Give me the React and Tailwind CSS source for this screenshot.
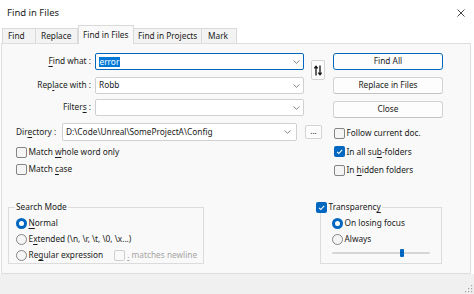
import React from 'react';

function U({ children }) {
  return <span className="underline underline-offset-[1.5px] decoration-[0.7px]">{children}</span>;
}

function Chevron() {
  return (
    <svg width="7" height="4" viewBox="0 0 7 4" className="shrink-0">
      <path d="M0.5 0.5 L3.5 3.3 L6.5 0.5" stroke="#7a7a7a" strokeWidth="0.9" fill="none" />
    </svg>
  );
}

function Checkbox({ checked = false, disabled = false }) {
  if (checked) {
    return (
      <span className="flex w-[11px] h-[11px] shrink-0 items-center justify-center rounded-[2px] bg-[#0067c0]">
        <svg width="9" height="9" viewBox="0 0 9 9">
          <path d="M2 4.8 L3.8 6.5 L7.2 2.8" stroke="#fff" strokeWidth="1.1" fill="none" />
        </svg>
      </span>
    );
  }
  return (
    <span
      className={`block w-[11px] h-[11px] shrink-0 rounded-[2px] border ${
        disabled ? 'border-[#cfcfcf] bg-[#f9f9f9]' : 'border-[#858585] bg-[#f5f5f5]'
      }`}
    />
  );
}

function Radio({ checked = false }) {
  if (checked) {
    return (
      <span className="flex w-[11px] h-[11px] shrink-0 items-center justify-center rounded-full bg-[#0067c0]">
        <span className="block w-[5px] h-[5px] rounded-full bg-white" />
      </span>
    );
  }
  return <span className="block w-[11px] h-[11px] shrink-0 rounded-full border border-[#858585] bg-[#f5f5f5]" />;
}

function Button({ primary = false, children }) {
  return (
    <div
      className={`flex h-[17px] w-[110px] items-center justify-center rounded-[3px] bg-[#fdfdfd] border ${
        primary ? 'border-[#0067c0]' : 'border-[#d3d3d3] border-b-[#c2c2c2]'
      }`}
    >
      {children}
    </div>
  );
}

export default function App() {
  return (
    <div className="w-[474px] h-[294px] overflow-hidden bg-white flex flex-col text-[8.3px] leading-none text-[#1b1b1b] font-['Noto_Sans',sans-serif]">
      {/* title bar */}
      <div className="h-[26px] shrink-0 flex items-center justify-between pl-[7px] pr-[9px]">
        <span className="text-[9.5px]">Find in Files</span>
        <svg width="8" height="8" viewBox="0 0 8 8">
          <path d="M0.5 0.5 L7.5 7.5 M7.5 0.5 L0.5 7.5" stroke="#333" strokeWidth="0.9" />
        </svg>
      </div>

      {/* tabs */}
      <div className="h-[17px] shrink-0 flex items-end pl-[2px] relative z-10">
        <div className="h-[15px] w-[34px] pl-[5px] flex items-center border border-b-0 border-[#dadada] bg-[#f3f3f3]">Find</div>
        <div className="h-[15px] w-[42px] pl-[5px] flex items-center border border-l-0 border-b-0 border-[#dadada] bg-[#f3f3f3]">Replace</div>
        <div className="h-[19px] w-[56px] pl-[4px] -mb-px flex items-center border border-b-0 border-[#dadada] bg-[#f9f9f9]">Find in Files</div>
        <div className="h-[15px] w-[68px] pl-[4px] flex items-center border border-l-0 border-b-0 border-[#dadada] bg-[#f3f3f3]">Find in Projects</div>
        <div className="h-[15px] w-[35px] pl-[6px] flex items-center border border-l-0 border-b-0 border-[#dadada] bg-[#f3f3f3]">Mark</div>
      </div>

      {/* panel */}
      <div className="h-[231px] shrink-0 ml-[1px] w-[470px] border border-[#dedede] bg-[#f9f9f9] flex flex-col">
        <div className="h-[157px] flex pt-[9px]">
          {/* left column */}
          <div className="w-[331px] flex flex-col">
            <div className="flex">
              <div className="flex flex-col gap-[7px]">
                <div className="flex items-center h-[17px]">
                  <span className="w-[90px] text-right pr-[1px]">
                    <U>F</U>ind what :
                  </span>
                  <div className="ml-[3px] w-[209px] h-[17px] flex items-center justify-between pl-[3px] pr-[3px] bg-white border border-[#0067c0] rounded-[2px]">
                    <span className="bg-[#0078d7] text-white leading-[10px] px-[0.5px]">error</span>
                    <Chevron />
                  </div>
                </div>
                <div className="flex items-center h-[17px]">
                  <span className="w-[90px] text-right pr-[1px]">
                    Rep<U>l</U>ace with :
                  </span>
                  <div className="ml-[3px] w-[209px] h-[17px] flex items-center justify-between pl-[3px] pr-[3px] bg-white border border-[#d0d0d0] rounded-[2px]">
                    <span>Robb</span>
                    <Chevron />
                  </div>
                </div>
              </div>
              <div className="ml-[7px] mt-[7px] w-[14px] h-[20px] flex items-center justify-center rounded-[2px] bg-[#fdfdfd] border border-[#d3d3d3]">
                <svg width="8" height="11" viewBox="0 0 8 11">
                  <path d="M2 10.5 V1.2 M0.3 3.3 L2 1.2 L3.7 3.3" stroke="#111" strokeWidth="1.3" fill="none" />
                  <path d="M6 0.5 V9.8 M4.3 7.7 L6 9.8 L7.7 7.7" stroke="#111" strokeWidth="1.3" fill="none" />
                </svg>
              </div>
            </div>

            <div className="flex items-center h-[17px] mt-[5px]">
              <span className="w-[90px] text-right pr-[1px]">
                Filter<U>s</U> :
              </span>
              <div className="ml-[3px] w-[209px] h-[17px] flex items-center justify-end pr-[3px] bg-white border border-[#d0d0d0] rounded-[2px]">
                <Chevron />
              </div>
            </div>

            <div className="flex items-center h-[18px] mt-[7px]">
              <span className="ml-[14px] w-[44px] whitespace-nowrap">
                Dir<U>e</U>ctory :
              </span>
              <div className="ml-[2px] w-[235px] h-[18px] flex items-center justify-between pl-[3px] pr-[5px] bg-white border border-[#d0d0d0] rounded-[2px]">
                <span>D:\Code\Unreal\SomeProjectA\Config</span>
                <Chevron />
              </div>
              <div className="ml-[8px] w-[17px] h-[14px] flex items-center justify-center rounded-[2px] bg-[#fdfdfd] border border-[#d3d3d3] pb-[2px]">
                ...
              </div>
            </div>

            <div className="mt-[3px] flex flex-col pl-[14px]">
              <div className="h-[17px] flex items-center gap-[1.5px]">
                <Checkbox />
                <span>
                  Match <U>w</U>hole word only
                </span>
              </div>
              <div className="h-[17px] flex items-center gap-[1.5px]">
                <Checkbox />
                <span>
                  Match <U>c</U>ase
                </span>
              </div>
            </div>
          </div>

          {/* right column */}
          <div className="w-[110px] flex flex-col">
            <div className="flex flex-col gap-[7px]">
              <Button primary>Find All</Button>
              <Button>Replace in Files</Button>
              <Button>Close</Button>
            </div>
            <div className="mt-[6px] flex flex-col pl-[1px]">
              <div className="h-[18.5px] flex items-center gap-[1.5px]">
                <Checkbox />
                <span>Follow current doc.</span>
              </div>
              <div className="h-[18.5px] flex items-center gap-[1.5px]">
                <Checkbox checked />
                <span>
                  In all su<U>b</U>-folders
                </span>
              </div>
              <div className="h-[18.5px] flex items-center gap-[1.5px]">
                <Checkbox />
                <span>
                  In <U>h</U>idden folders
                </span>
              </div>
            </div>
          </div>
        </div>

        {/* group boxes */}
        <div className="flex pl-[6px]">
          <fieldset className="w-[196px] border border-[#dcdcdc]">
            <legend className="ml-[6px] px-[1px] leading-[12px]">Search Mode</legend>
            <div className="pt-[2px] pl-[7px] flex flex-col">
              <div className="h-[16px] flex items-center gap-[1.5px]">
                <Radio checked />
                <span>
                  <U>N</U>ormal
                </span>
              </div>
              <div className="h-[16px] flex items-center gap-[1.5px]">
                <Radio />
                <span>
                  E<U>x</U>tended (\n, \r, \t, \0, \x...)
                </span>
              </div>
              <div className="h-[16px] flex items-center">
                <Radio />
                <span className="ml-[1.5px]">
                  Re<U>g</U>ular expression
                </span>
                <span className="ml-[11px]">
                  <Checkbox disabled />
                </span>
                <span className="ml-[2px] text-[#a6a6a6]">
                  <U>.</U> matches newline
                </span>
              </div>
            </div>
          </fieldset>

          <fieldset className="ml-[116px] w-[122px] border border-[#dcdcdc]">
            <legend className="-ml-[5px] pr-[1px] leading-[12px]">
              <span className="flex items-center gap-[1.5px]">
                <Checkbox checked />
                <span>
                  Transparenc<U>y</U>
                </span>
              </span>
            </legend>
            <div className="pt-[2px] pl-[11px] flex flex-col">
              <div className="h-[16px] flex items-center gap-[1.5px]">
                <Radio checked />
                <span>On losing focus</span>
              </div>
              <div className="h-[16px] flex items-center gap-[1.5px]">
                <Radio />
                <span>Always</span>
              </div>
              <div className="h-[16px] pt-[2px]">
                <div className="relative w-[98px] h-[8px]">
                  <div className="absolute left-0 right-0 top-[3px] h-[2px] rounded-full bg-[#d6d6d6]" />
                  <div className="absolute left-[68px] top-0 w-[4px] h-[8px] rounded-[1px] bg-[#0067c0]" />
                </div>
              </div>
            </div>
          </fieldset>
        </div>
      </div>

      {/* status bar */}
      <div className="flex-1 bg-[#f0f0f0] flex items-end justify-end pr-[1px] pb-[1px]">
        <svg width="8" height="8" viewBox="0 0 8 8">
          <rect x="6" y="0" width="1.2" height="1.2" fill="#a0a0a0" />
          <rect x="3" y="3" width="1.2" height="1.2" fill="#a0a0a0" />
          <rect x="6" y="3" width="1.2" height="1.2" fill="#a0a0a0" />
          <rect x="0" y="6" width="1.2" height="1.2" fill="#a0a0a0" />
          <rect x="3" y="6" width="1.2" height="1.2" fill="#a0a0a0" />
          <rect x="6" y="6" width="1.2" height="1.2" fill="#a0a0a0" />
        </svg>
      </div>
    </div>
  );
}
